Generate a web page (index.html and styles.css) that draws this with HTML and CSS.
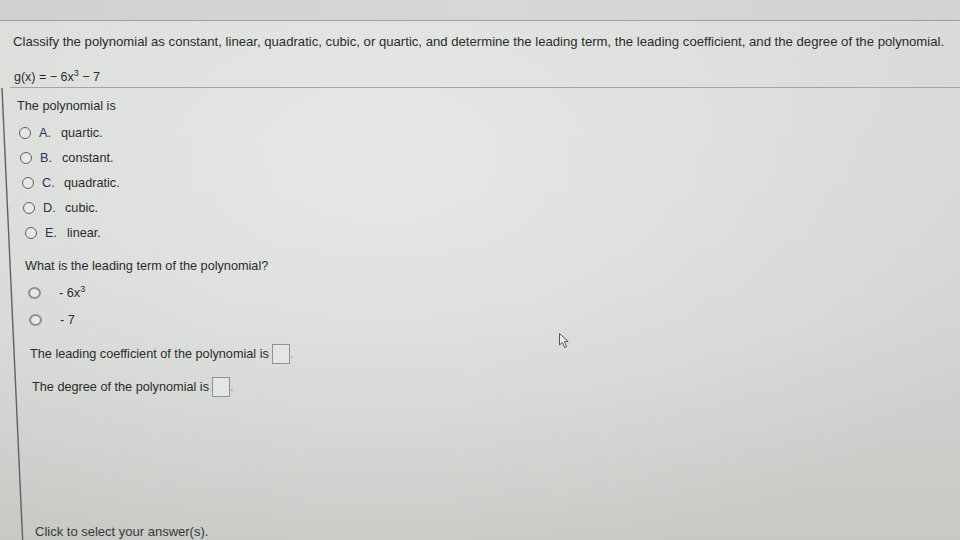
FILE: index.html
```html
<!DOCTYPE html>
<html>
<head>
<meta charset="utf-8">
<link rel="stylesheet" href="styles.css">
</head>
<body>
<div class="screen">
  <div class="topband"></div>
  <div class="question">Classify the polynomial as constant, linear, quadratic, cubic, or quartic, and determine the leading term, the leading coefficient, and the degree of the polynomial.</div>
  <div class="func">g(x) = &minus; 6x<sup>3</sup> &minus; 7</div>
  <div class="panel">
    <div class="label">The polynomial is</div>
    <div class="opts">
      <div class="opt o1"><span class="radio"></span><span class="let">A.</span><span>quartic.</span></div>
      <div class="opt o2"><span class="radio"></span><span class="let">B.</span><span>constant.</span></div>
      <div class="opt o3"><span class="radio"></span><span class="let">C.</span><span>quadratic.</span></div>
      <div class="opt o4"><span class="radio"></span><span class="let">D.</span><span>cubic.</span></div>
      <div class="opt o5"><span class="radio"></span><span class="let">E.</span><span>linear.</span></div>
    </div>
    <div class="label q2">What is the leading term of the polynomial?</div>
    <div class="terms">
      <div class="term t1"><span class="radio"></span><span>- 6x<sup>3</sup></span></div>
      <div class="term t2"><span class="radio"></span><span>- 7</span></div>
    </div>
    <div class="fill f1">The leading coefficient of the polynomial is <span class="box"></span><span class="dot">.</span></div>
    <div class="fill f2">The degree of the polynomial is <span class="box"></span><span class="dot">.</span></div>
    <div class="spacer"></div>
    <div class="hint">Click to select your answer(s).</div>
  </div>
  <svg class="edge" width="40" height="460" viewBox="0 0 40 460"><line x1="2" y1="0" x2="23" y2="460" stroke="#5f6261" stroke-width="1.4"/></svg>
  <svg class="cursor" width="14" height="18" viewBox="0 0 14 18"><path d="M1.5 1.5 L1.5 13 L4.3 10.5 L6.6 15.6 L8.6 14.7 L6.4 9.7 L10.2 9.5 Z" fill="#eeeeee" stroke="#555" stroke-width="1" stroke-linejoin="round"/></svg>
</div>
</body>
</html>
```
FILE: styles.css
```css
html, body {
  margin: 0;
  padding: 0;
}
body {
  width: 960px;
  height: 540px;
  overflow: hidden;
  font-family: "Liberation Sans", Arial, sans-serif;
  color: #2a2c2b;
}
.screen {
  position: relative;
  width: 960px;
  height: 540px;
  background:
    radial-gradient(ellipse 700px 420px at 380px 160px, rgba(232,234,232,0.9) 0%, rgba(232,234,232,0) 100%),
    linear-gradient(180deg, #d8dad7 0%, #d2d4d1 60%, #c6c9c4 100%);
  display: flex;
  flex-direction: column;
}
.topband {
  height: 20px;
  border-bottom: 1px solid #9c9f9d;
  background: linear-gradient(90deg, #cfd1ce 0%, #d6d8d5 50%, #d2d4d1 100%);
}
.question {
  font-size: 13.15px;
  padding: 14px 0 0 13px;
  line-height: 14px;
  white-space: nowrap;
}
.func {
  font-size: 12.5px;
  padding: 21px 0 3px 4px;
  margin-left: 10px;
  line-height: 14px;
  height: 14px;
  border-bottom: 1px solid #a2a5a3;
}
.func sup, .term sup {
  font-size: 9px;
  line-height: 0;
  vertical-align: 5px;
}
.panel {
  flex: 1;
  display: flex;
  flex-direction: column;
  font-size: 12.7px;
  line-height: 14px;
}
.label {
  padding: 11px 0 0 17px;
  height: 14px;
}
.opts {
  display: flex;
  flex-direction: column;
  gap: 11px;
  padding-top: 13px;
}
.opt {
  display: flex;
  align-items: center;
  height: 14px;
}
.o1 { padding-left: 19px; }
.o2 { padding-left: 20px; }
.o3 { padding-left: 22px; }
.o4 { padding-left: 23px; }
.o5 { padding-left: 25px; }
.radio {
  box-sizing: border-box;
  width: 12px;
  height: 12px;
  border: 1.4px solid #5e6160;
  border-radius: 50%;
  background: #e6e8e6;
  margin-right: 8px;
  flex: none;
}
.let {
  color: #2a3158;
  width: 22px;
}
.q2 {
  padding: 19px 0 0 25px;
}
.terms {
  display: flex;
  flex-direction: column;
  gap: 13px;
  padding-top: 13px;
}
.term {
  display: flex;
  align-items: center;
  height: 14px;
}
.term .radio {
  margin-right: 18px;
  border: 2px solid #8f9190;
  width: 13px;
  height: 12px;
}
.t1 { padding-left: 28px; }
.t2 { padding-left: 29px; }
.fill {
  display: flex;
  align-items: center;
  height: 20px;
}
.f1 { padding: 17px 0 0 30px; }
.f2 { padding: 13px 0 0 32px; }
.box {
  width: 16px;
  height: 18px;
  border: 1px solid #8f9291;
  background: #e4e6e4;
  margin-left: 3px;
}
.dot {
  color: #8a8d8c;
}
.spacer {
  flex: 1;
}
.hint {
  padding: 0 0 1px 35px;
  font-size: 13px;
  color: #363938;
}
.edge {
  position: absolute;
  left: 0;
  top: 88px;
}
.cursor {
  position: absolute;
  left: 558px;
  top: 332px;
}
```
